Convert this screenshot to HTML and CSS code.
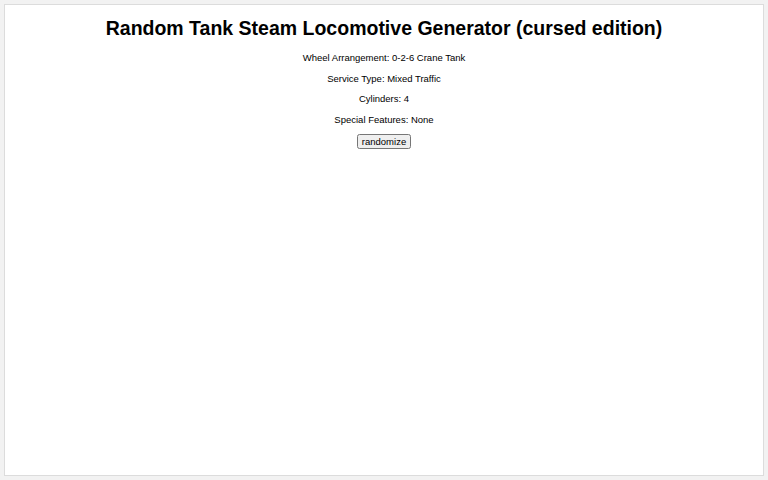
FILE: index.html
```html
<!doctype html>
<html lang="en">
  <head>
    <meta charset="UTF-8" />
    <title>Random Tank Steam Locomotive Generator</title>
    <link rel="stylesheet" href="styles.css">
  </head>
  <body>
    <div class="page">
      <h1>Random Tank Steam Locomotive Generator (cursed edition)</h1>
      <p id="wheels">Wheel Arrangement: 0-2-6 Crane Tank</p>
      <p id="service">Service Type: Mixed Traffic</p>
      <p id="cylinders">Cylinders: 4</p>
      <p id="features">Special Features: None</p>
      <button class="randomize">randomize</button>
    </div>
  </body>
</html>
```

FILE: styles.css
```css
body {
  margin: 0;
  padding: 4px;
  background-color: #f2f2f2;
  font-family: "Liberation Sans", Arial, sans-serif;
  color: #000;
}

* {
  box-sizing: border-box;
}

.page {
  height: 472px;
  background-color: #fff;
  border: 1px solid #dcdcdc;
  text-align: center;
  padding-top: 12px;
}

.page h1 {
  font-size: 19.5px;
  margin: 0 0 12px 0;
}

.page p {
  font-size: 9.5px;
  margin: 0 0 8px 0;
  line-height: 12.5px;
}
.page p:last-of-type {
  margin-bottom: 5px;
}

.randomize {
  font-family: "Liberation Sans", Arial, sans-serif;
  font-size: 9.5px;
  padding: 0 3px;
  margin: 0;
}
```
